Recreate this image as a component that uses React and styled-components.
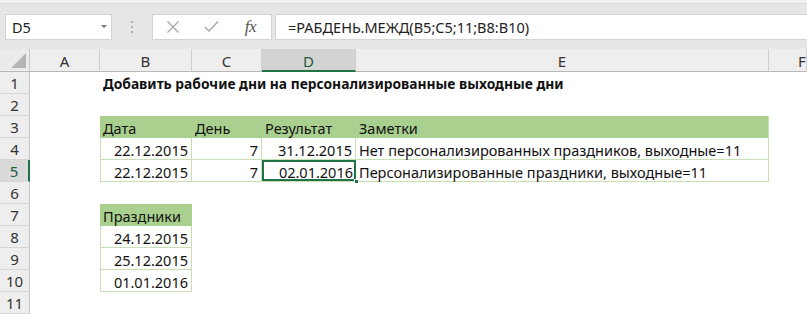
import React from "react";
import styled, { createGlobalStyle, css } from "styled-components";

const Global = createGlobalStyle`
  html, body { margin: 0; padding: 0; background: #fff; }
  body { font-family: "Noto Sans", "Open Sans", sans-serif; }
  #root { width: 807px; height: 317px; overflow: hidden; }
`;

const Frame = styled.div`
  width: 807px;
  height: 317px;
  overflow: hidden;
  display: flex;
  flex-direction: column;
  background: #fff;
`;

const TopStrip = styled.div`
  height: 3px;
  background: #f2f2f2;
  border-bottom: 1px solid #d9d9d9;
`;

const Toolbar = styled.div`
  height: 45px;
  box-sizing: border-box;
  background: #e6e6e6;
  display: flex;
  align-items: center;
  padding: 0 0 0 5px;
`;

const Box = styled.div`
  height: 26px;
  box-sizing: border-box;
  background: #fff;
  border: 1px solid #d4d4d4;
  display: flex;
  align-items: center;
`;

const NameBox = styled(Box)`
  width: 107px;
  padding: 0 4px 0 6px;
  justify-content: space-between;
  font-size: 14.5px;
  color: #222;
`;

const Caret = styled.span`
  width: 0;
  height: 0;
  border-left: 3px solid transparent;
  border-right: 3px solid transparent;
  border-top: 3px solid #777;
`;

const Grip = styled.div`
  width: 40px;
  display: flex;
  flex-direction: column;
  align-items: center;
  gap: 3px;
  & > i {
    width: 2px;
    height: 2px;
    background: #9a9a9a;
    border-radius: 1px;
  }
`;

const FxBox = styled(Box)`
  width: 120px;
  padding: 0;
`;

const IconSlot = styled.span`
  width: 40px;
  display: flex;
  justify-content: center;
  align-items: center;
`;

const FxText = styled.span`
  font-family: "Liberation Serif", "DejaVu Serif", serif;
  font-style: italic;
  font-size: 17px;
  color: #555;
  letter-spacing: -0.5px;
  margin-left: -2px;
`;

const Formula = styled(Box)`
  flex: 1;
  margin-left: 3px;
  border-right: none;
  padding-left: 12px;
  font-size: 14.5px;
  color: #222;
  white-space: nowrap;
`;

const Sheet = styled.div`
  display: grid;
  grid-template-columns: 30px 70px 92px 70px 94px 413px 1fr;
  grid-template-rows: 23px;
  grid-auto-rows: 22px;
  font-size: 14.5px;
  color: #111;
`;

const Corner = styled.div`
  background: #ebebeb;
  border-right: 1px solid #c8c8c8;
  border-bottom: 1px solid #b8b8b8;
  box-sizing: border-box;
  display: flex;
  justify-content: flex-end;
  align-items: flex-end;
  padding: 0 3px 3px 0;
`;

const Triangle = styled.span`
  width: 0;
  height: 0;
  border-left: 15px solid transparent;
  border-bottom: 15px solid #b5b5b5;
`;

const ColHead = styled.div`
  box-sizing: border-box;
  background: ${(p) => (p.$active ? "#d3d3d3" : "#eeeeee")};
  border-right: 1px solid #cfcfcf;
  border-bottom: ${(p) => (p.$active ? "2px solid #217346" : "1px solid #b8b8b8")};
  color: ${(p) => (p.$active ? "#1e5c3a" : "#333")};
  display: flex;
  align-items: center;
  justify-content: ${(p) => (p.$clip ? "flex-start" : "center")};
  padding: 2px 0 0 ${(p) => (p.$clip ? "29px" : "0")};
  font-size: 15px;
`;

const RowHead = styled.div`
  box-sizing: border-box;
  background: ${(p) => (p.$active ? "#dadada" : "#eeeeee")};
  border-right: ${(p) => (p.$active ? "2px solid #217346" : "1px solid #c8c8c8")};
  border-bottom: 1px solid #d6d6d6;
  color: ${(p) => (p.$active ? "#1e5c3a" : "#333")};
  display: flex;
  align-items: center;
  justify-content: center;
  font-size: 15px;
  padding-top: 1px;
`;

const green = "#c6e0b4";

const Cell = styled.div`
  position: relative;
  box-sizing: border-box;
  padding: 2px 3px 0 3px;
  line-height: 20px;
  white-space: nowrap;
  text-align: ${(p) => (p.$right ? "right" : "left")};
  font-weight: ${(p) => (p.$bold ? 700 : 400)};
  font-size: ${(p) => (p.$bold ? "13.8px" : "inherit")};
  background: ${(p) => (p.$head ? "#a9d08e" : "transparent")};
  ${(p) =>
    p.$body &&
    css`
      border-bottom: 1px solid ${green};
      border-right: 1px solid ${green};
    `}
  ${(p) =>
    p.$first &&
    css`
      border-left: 1px solid ${green};
    `}
  ${(p) =>
    p.$head &&
    p.$edge &&
    css`
      border-right: 1px solid ${green};
    `}
  ${(p) =>
    p.$active &&
    css`
      box-shadow: inset 0 0 0 2px #217346;
      border-right: none;
      &::after {
        content: "";
        position: absolute;
        right: -3px;
        bottom: -3px;
        width: 5px;
        height: 5px;
        background: #217346;
        border: 1px solid #fff;
        box-sizing: border-box;
        z-index: 2;
      }
    `}
`;

const cols = ["A", "B", "C", "D", "E", "F"];

const rows = {
  1: { B: { text: "Добавить рабочие дни на персонализированные выходные дни", bold: true } },
  3: {
    B: { text: "Дата", head: true },
    C: { text: "День", head: true },
    D: { text: "Результат", head: true },
    E: { text: "Заметки", head: true, edge: true },
  },
  4: {
    B: { text: "22.12.2015", right: true, body: true, first: true },
    C: { text: "7", right: true, body: true },
    D: { text: "31.12.2015", right: true, body: true },
    E: { text: "Нет персонализированных праздников, выходные=11", body: true },
  },
  5: {
    B: { text: "22.12.2015", right: true, body: true, first: true },
    C: { text: "7", right: true, body: true },
    D: { text: "02.01.2016", right: true, body: true, active: true },
    E: { text: "Персонализированные праздники, выходные=11", body: true },
  },
  7: { B: { text: "Праздники", head: true } },
  8: { B: { text: "24.12.2015", right: true, body: true, first: true } },
  9: { B: { text: "25.12.2015", right: true, body: true, first: true } },
  10: { B: { text: "01.01.2016", right: true, body: true, first: true } },
};

const XIcon = () => (
  <svg width="14" height="14" viewBox="0 0 14 14">
    <path d="M1.5 1.5 L12.5 12.5 M12.5 1.5 L1.5 12.5" stroke="#a8a8a8" strokeWidth="1.3" fill="none" />
  </svg>
);

const CheckIcon = () => (
  <svg width="15" height="13" viewBox="0 0 15 13">
    <path d="M1 7 L5 11 L14 1.5" stroke="#a8a8a8" strokeWidth="1.5" fill="none" />
  </svg>
);

export default function App() {
  const rowNums = Array.from({ length: 11 }, (_, i) => i + 1);
  return (
    <Frame>
      <Global />
      <TopStrip />
      <Toolbar>
        <NameBox>
          <span>D5</span>
          <Caret />
        </NameBox>
        <Grip>
          <i />
          <i />
          <i />
        </Grip>
        <FxBox>
          <IconSlot>
            <XIcon />
          </IconSlot>
          <IconSlot>
            <CheckIcon />
          </IconSlot>
          <IconSlot>
            <FxText>fx</FxText>
          </IconSlot>
        </FxBox>
        <Formula>=РАБДЕНЬ.МЕЖД(B5;C5;11;B8:B10)</Formula>
      </Toolbar>
      <Sheet>
        <Corner>
          <Triangle />
        </Corner>
        {cols.map((c) => (
          <ColHead key={c} $active={c === "D"} $clip={c === "F"}>
            {c}
          </ColHead>
        ))}
        {rowNums.map((r) => (
          <React.Fragment key={r}>
            <RowHead $active={r === 5}>{r}</RowHead>
            {cols.map((c) => {
              const d = (rows[r] && rows[r][c]) || {};
              return (
                <Cell
                  key={c}
                  $bold={d.bold}
                  $right={d.right}
                  $head={d.head}
                  $body={d.body}
                  $first={d.first}
                  $edge={d.edge}
                  $active={d.active}
                >
                  {d.text}
                </Cell>
              );
            })}
          </React.Fragment>
        ))}
      </Sheet>
    </Frame>
  );
}
